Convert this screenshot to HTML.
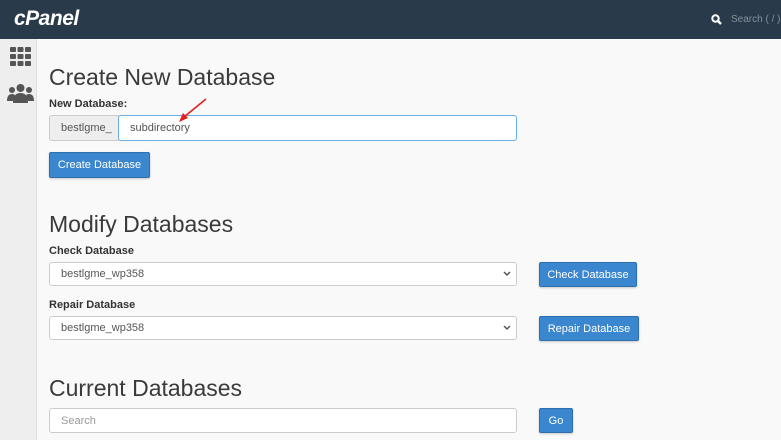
<!DOCTYPE html>
<html><head><style>
*{box-sizing:border-box;margin:0;padding:0}
body{width:781px;height:440px;overflow:hidden;background:#f9f9f9;font-family:"Liberation Sans",sans-serif;position:relative;color:#333}
.top{position:absolute;left:0;top:0;width:781px;height:39px;background:#293a4a}
.logo{position:absolute;left:14px;top:7px;color:#fff;font-size:21px;font-weight:bold;font-style:italic;letter-spacing:-0.5px}
.srch{position:absolute;left:731px;top:14px;color:#8391a0;font-size:10px}
.side{position:absolute;left:0;top:39px;width:37px;height:401px;background:#eeeeee;border-right:1px solid #ddd}
.abs{position:absolute}
h1{position:absolute;font-weight:normal;font-size:23px;color:#3a3a3a;left:49px}
.lbl{position:absolute;left:49px;font-size:11px;font-weight:bold;color:#333}
.inp{position:absolute;background:#fff;border:1px solid #ccc;border-radius:3px;font-size:11px;color:#555;padding-left:11px;display:flex;align-items:center}
.btn{position:absolute;background:#3a87cf;border:1px solid #2e6fad;border-radius:2px;color:#fff;font-size:11px;display:flex;align-items:center;justify-content:center;box-shadow:0 1px 2px rgba(0,0,0,.2)}
.chev{position:absolute;right:5px;top:8px}
</style></head><body>
<div class="top"><div class="logo">cPanel</div>
<svg class="abs" style="left:711px;top:14px" width="11" height="11" viewBox="0 0 11 11"><circle cx="4.5" cy="4.5" r="3.2" fill="none" stroke="#fff" stroke-width="2"/><line x1="7" y1="7" x2="10" y2="10" stroke="#fff" stroke-width="2.4"/></svg>
<div class="srch">Search ( / )</div></div>
<div class="side">
<svg class="abs" style="left:10px;top:8px" width="22" height="20"><g fill="#555"><rect x="0" y="0" width="6" height="5" rx="1"/><rect x="7.5" y="0" width="6" height="5" rx="1"/><rect x="15" y="0" width="6" height="5" rx="1"/><rect x="0" y="7" width="6" height="5" rx="1"/><rect x="7.5" y="7" width="6" height="5" rx="1"/><rect x="15" y="7" width="6" height="5" rx="1"/><rect x="0" y="14" width="6" height="5" rx="1"/><rect x="7.5" y="14" width="6" height="5" rx="1"/><rect x="15" y="14" width="6" height="5" rx="1"/></g></svg>
<svg class="abs" style="left:7px;top:44px" width="27" height="20"><g fill="#555"><circle cx="13.5" cy="5" r="4"/><circle cx="5" cy="7" r="3"/><circle cx="22" cy="7" r="3"/><path d="M6 20 Q6 10 13.5 10 Q21 10 21 20Z"/><path d="M0 18 Q0 11 5 11 Q8 11 8 13 L6 18Z"/><path d="M27 18 Q27 11 22 11 Q19 11 19 13 L21 18Z"/></g></svg>
</div>
<h1 style="top:64px">Create New Database</h1>
<div class="lbl" style="top:98px">New Database:</div>
<div class="inp" style="left:49px;top:115px;width:70px;height:26px;background:#eee;border-radius:3px 0 0 3px">bestlgme_</div>
<div class="inp" style="left:118px;top:115px;width:399px;height:26px;border-color:#66afe9">subdirectory</div>
<svg class="abs" style="left:175px;top:97px" width="34" height="30"><line x1="31" y1="2" x2="9" y2="20" stroke="#e02020" stroke-width="1.6"/><path d="M4 25 L8 16 L13 21Z" fill="#e02020"/></svg>
<div class="btn" style="left:49px;top:152px;width:101px;height:26px">Create Database</div>
<h1 style="top:211px">Modify Databases</h1>
<div class="lbl" style="top:245px">Check Database</div>
<div class="inp" style="left:49px;top:262px;width:468px;height:24px">bestlgme_wp358<svg class="chev" width="8" height="6"><path d="M1 1 L4 4 L7 1" fill="none" stroke="#555" stroke-width="1.5"/></svg></div>
<div class="btn" style="left:539px;top:262px;width:98px;height:25px">Check Database</div>
<div class="lbl" style="top:299px">Repair Database</div>
<div class="inp" style="left:49px;top:316px;width:468px;height:24px">bestlgme_wp358<svg class="chev" width="8" height="6"><path d="M1 1 L4 4 L7 1" fill="none" stroke="#555" stroke-width="1.5"/></svg></div>
<div class="btn" style="left:539px;top:316px;width:100px;height:25px">Repair Database</div>
<h1 style="top:375px">Current Databases</h1>
<div class="inp" style="left:49px;top:408px;width:468px;height:25px;color:#999">Search</div>
<div class="btn" style="left:539px;top:408px;width:34px;height:25px">Go</div>
</body></html>
